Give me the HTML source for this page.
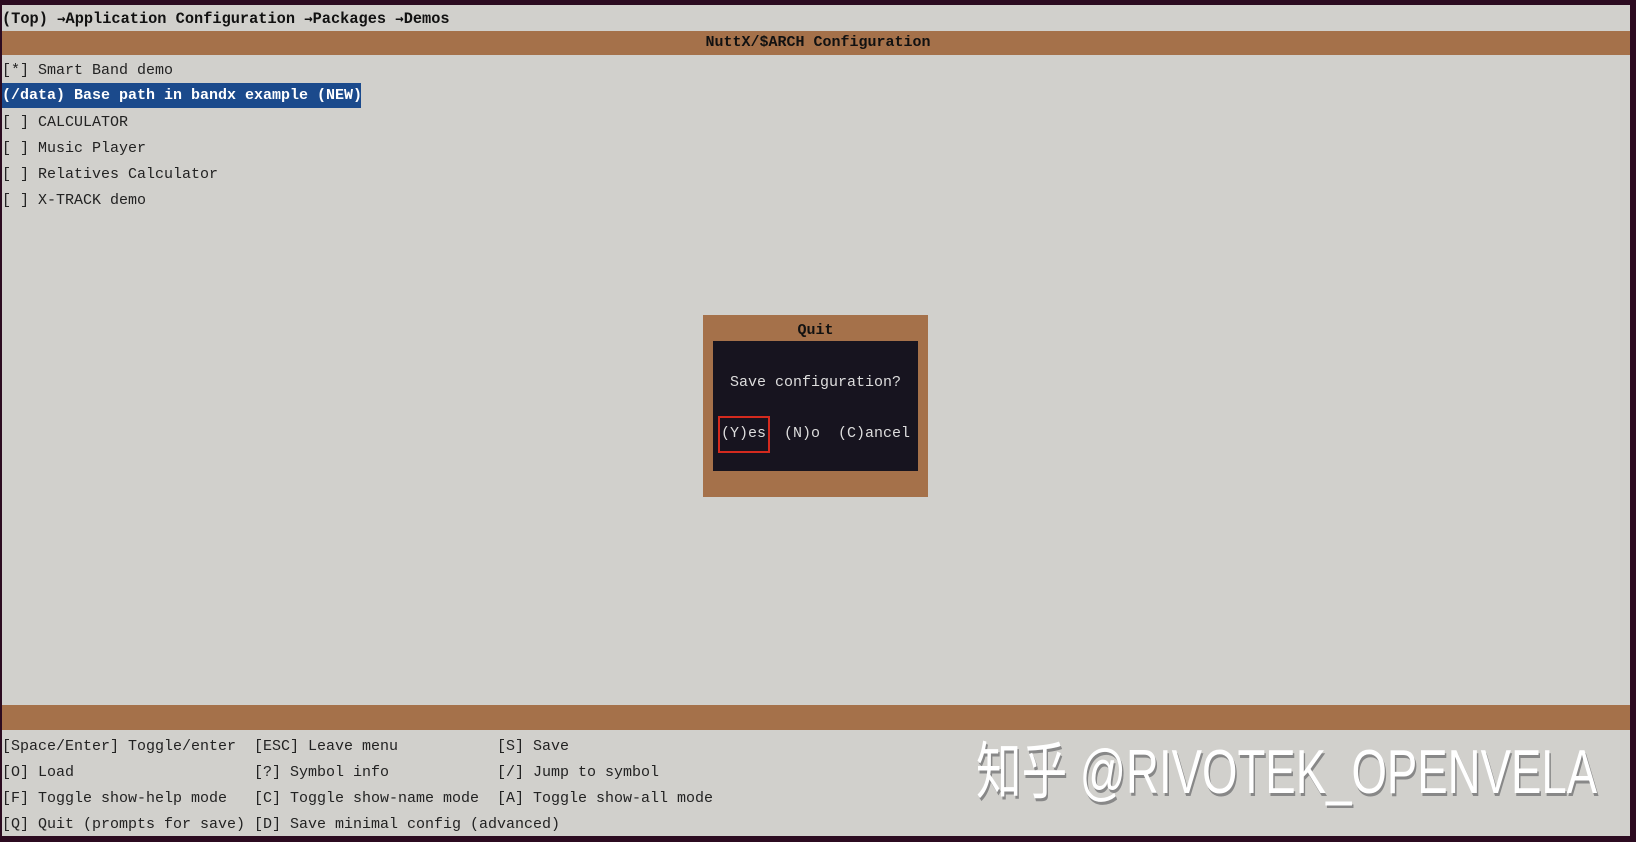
<!DOCTYPE html>
<html><head><meta charset="utf-8"><style>
html,body{margin:0;padding:0}
body{width:1636px;height:842px;background:#d1d0cc;position:relative;overflow:hidden;font-family:"Liberation Mono",monospace;font-size:15px;color:#222}
.a{position:absolute;white-space:pre;line-height:26px}
.b{font-weight:bold}
</style></head><body>
<div style="position:absolute;left:0;top:0;width:1636px;height:5px;background:#2c0b20"></div>
<div style="position:absolute;left:0;top:0;width:2px;height:842px;background:#2c0b20"></div>
<div style="position:absolute;right:0;top:0;width:6px;height:842px;background:#2c0b20"></div>
<div style="position:absolute;left:0;top:836px;width:1636px;height:6px;background:#2c0b20"></div>

<div class="a b" style="left:2px;top:6px;color:#111;font-size:15.3px">(Top) <span style="font-family:'DejaVu Sans Mono',monospace;font-size:14px">→</span>Application Configuration <span style="font-family:'DejaVu Sans Mono',monospace;font-size:14px">→</span>Packages <span style="font-family:'DejaVu Sans Mono',monospace;font-size:14px">→</span>Demos</div>
<div style="position:absolute;left:2px;top:31px;width:1628px;height:24px;background:#a5714a"></div>
<div class="a b" style="left:0;width:1636px;text-align:center;top:31px;line-height:24px;color:#111">NuttX/$ARCH Configuration</div>

<div class="a" style="left:2px;top:58px">[*] Smart Band demo</div>
<div style="position:absolute;left:2px;top:83px;width:359px;height:25px;background:#1b4a8c"></div>
<div class="a b" style="left:2px;top:83px;color:#fff">(/data) Base path in bandx example (NEW)</div>
<div class="a" style="left:2px;top:110px">[ ] CALCULATOR</div>
<div class="a" style="left:2px;top:136px">[ ] Music Player</div>
<div class="a" style="left:2px;top:162px">[ ] Relatives Calculator</div>
<div class="a" style="left:2px;top:188px">[ ] X-TRACK demo</div>

<div style="position:absolute;left:703px;top:315px;width:225px;height:182px;background:#a5714a"></div>
<div class="a b" style="left:703px;width:225px;text-align:center;top:318px;color:#111">Quit</div>
<div style="position:absolute;left:713px;top:341px;width:205px;height:130px;background:#17141f"></div>
<div class="a" style="left:713px;width:205px;text-align:center;top:370px;color:#ddd">Save configuration?</div>
<div class="a" style="left:721px;top:421px;color:#ddd">(Y)es  (N)o  (C)ancel</div>
<div style="position:absolute;left:718px;top:416px;width:48px;height:33px;border:2px solid #d42a1e"></div>

<div style="position:absolute;left:2px;top:705px;width:1628px;height:25px;background:#a5714a"></div>
<div class="a" style="left:2px;top:734px">[Space/Enter] Toggle/enter</div>
<div class="a" style="left:254px;top:734px">[ESC] Leave menu</div>
<div class="a" style="left:497px;top:734px">[S] Save</div>
<div class="a" style="left:2px;top:760px">[O] Load</div>
<div class="a" style="left:254px;top:760px">[?] Symbol info</div>
<div class="a" style="left:497px;top:760px">[/] Jump to symbol</div>
<div class="a" style="left:2px;top:786px">[F] Toggle show-help mode</div>
<div class="a" style="left:254px;top:786px">[C] Toggle show-name mode</div>
<div class="a" style="left:497px;top:786px">[A] Toggle show-all mode</div>
<div class="a" style="left:2px;top:812px">[Q] Quit (prompts for save)</div>
<div class="a" style="left:254px;top:812px">[D] Save minimal config (advanced)</div>

<div style="position:absolute;left:976px;top:737px;white-space:pre;font-family:'Liberation Sans','Noto Sans CJK SC',sans-serif;font-size:62px;line-height:72px;color:#fff;text-shadow:2px 3px 0 #888;transform:scaleX(0.735);transform-origin:0 0">知乎 @RIVOTEK_OPENVELA</div>
</body></html>
